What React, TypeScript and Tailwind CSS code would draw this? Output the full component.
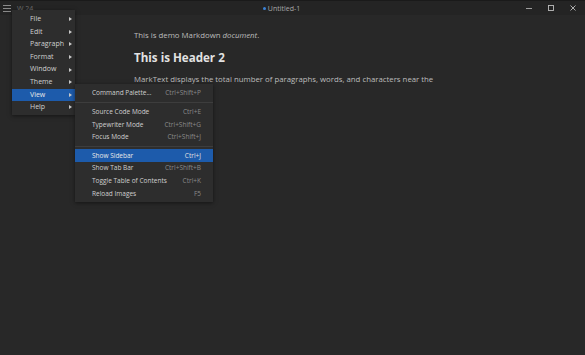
import React from "react";

const mainItems = ["File", "Edit", "Paragraph", "Format", "Window", "Theme", "View", "Help"];

type SubItem = { label: string; key: string; sep?: boolean; active?: boolean };

const viewItems: SubItem[] = [
  { label: "Command Palette...", key: "Ctrl+Shift+P", sep: true },
  { label: "Source Code Mode", key: "Ctrl+E" },
  { label: "Typewriter Mode", key: "Ctrl+Shift+G" },
  { label: "Focus Mode", key: "Ctrl+Shift+J", sep: true },
  { label: "Show Sidebar", key: "Ctrl+J", active: true },
  { label: "Show Tab Bar", key: "Ctrl+Shift+B" },
  { label: "Toggle Table of Contents", key: "Ctrl+K" },
  { label: "Reload Images", key: "F5" },
];

const font = { fontFamily: '"Open Sans", "Noto Sans", sans-serif' };

export default function App() {
  return (
    <div className="relative w-[585px] h-[355px] overflow-hidden bg-[#282828] text-[#cfcfcf]" style={font}>
      {/* TITLE BAR */}
      <div className="flex items-center h-[15px] bg-[#242424] border-t border-[#1a1a1a]">
        <div className="flex items-center gap-[6px] pl-[3px] w-[200px]">
          <svg width="8" height="7" viewBox="0 0 8 7">
            <rect x="0" y="0" width="8" height="1" fill="#8a8a8a" />
            <rect x="0" y="3" width="8" height="1" fill="#8a8a8a" />
            <rect x="0" y="6" width="8" height="1" fill="#8a8a8a" />
          </svg>
          <span className="text-[7px] text-[#6e6e6e] leading-none">W 24</span>
        </div>
        <div className="flex-1 flex items-center justify-center gap-[2px] pr-[22px]">
          <span className="w-[3px] h-[3px] rounded-full bg-[#3b82d6]" />
          <span className="text-[7px] text-[#a8a8a8] leading-none">Untitled-1</span>
        </div>
        <div className="flex items-center w-[200px] justify-end pr-[9px] gap-[16px]">
          <svg width="6" height="6" viewBox="0 0 6 6"><rect x="0" y="3" width="6" height="0.8" fill="#bdbdbd" /></svg>
          <svg width="6" height="6" viewBox="0 0 6 6"><rect x="0.5" y="0.5" width="5" height="5" fill="none" stroke="#bdbdbd" strokeWidth="0.9" /></svg>
          <svg width="6" height="6" viewBox="0 0 6 6"><path d="M0.5 0.5L5.5 5.5M5.5 0.5L0.5 5.5" stroke="#bdbdbd" strokeWidth="0.9" /></svg>
        </div>
      </div>

      {/* EDITOR */}
      <div className="pl-[134px] pt-[14px] pr-[100px]">
        <p className="text-[7.8px] leading-[12px] text-[#bdbdbd]">
          This is demo Markdown <em>document</em>.
        </p>
        <h2 className="mt-[9px] text-[11.6px] font-bold leading-[16px] text-[#e2e2e2]">This is Header 2</h2>
        <p className="mt-[7px] text-[7.8px] leading-[12px] text-[#bdbdbd] whitespace-nowrap">
          MarkText displays the total number of paragraphs, words, and characters near the
        </p>
      </div>

      {/* MAIN MENU */}
      <div className="absolute left-[12px] top-[10px] w-[63px] pt-[3px] pb-[1px] bg-[#2d2d2d] shadow-[0_1px_4px_rgba(0,0,0,0.5)]">
        {mainItems.map((m) => (
          <div
            key={m}
            className={`flex items-center justify-between h-[12.6px] pl-[18px] pr-[3px] text-[7px] ${
              m === "View" ? "bg-[#1d5bab] text-[#e8e8e8]" : "text-[#d0d0d0]"
            }`}
          >
            <span>{m}</span>
            <svg width="3" height="4" viewBox="0 0 3 4"><path d="M0 0L3 2L0 4Z" fill="#c8c8c8" /></svg>
          </div>
        ))}
      </div>

      {/* VIEW SUBMENU */}
      <div className="absolute left-[75px] top-[84px] w-[138px] pt-[3px] pb-[2px] bg-[#2d2d2d] shadow-[0_1px_4px_rgba(0,0,0,0.5)]">
        {viewItems.map((it) => (
          <div key={it.label}>
            <div
              className={`flex items-center justify-between h-[12.6px] pl-[17px] pr-[12px] text-[6.5px] ${
                it.active ? "bg-[#1d5bab] text-[#e8e8e8]" : "text-[#d0d0d0]"
              }`}
            >
              <span>{it.label}</span>
              <span className={it.active ? "text-[#e0e0e0]" : "text-[#8a8a8a]"}>{it.key}</span>
            </div>
            {it.sep && <div className="my-[2.5px] h-px bg-[#3d3d3d]" />}
          </div>
        ))}
      </div>
    </div>
  );
}
